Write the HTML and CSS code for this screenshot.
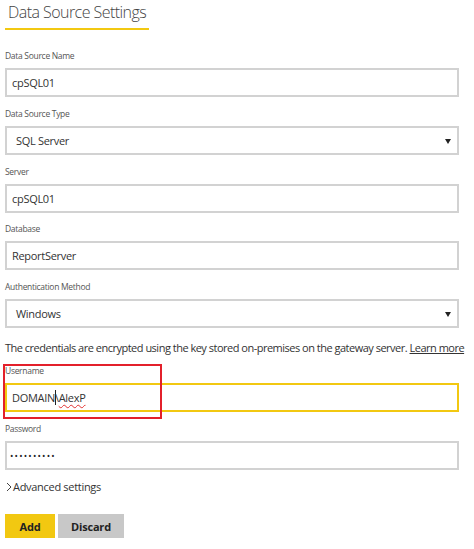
FILE: index.html
```html
<!DOCTYPE html>
<html>
<head>
<meta charset="utf-8">
<link rel="stylesheet" href="styles.css">
</head>
<body>
<div class="page">
  <div class="title-wrap">
    <h1 class="title">Data Source Settings</h1>
  </div>

  <div class="field first">
    <div class="label">Data Source Name</div>
    <div class="input">cpSQL01</div>
  </div>
  <div class="field">
    <div class="label">Data Source Type</div>
    <div class="input select">SQL Server<span class="arrow"></span></div>
  </div>
  <div class="field">
    <div class="label">Server</div>
    <div class="input">cpSQL01</div>
  </div>
  <div class="field">
    <div class="label">Database</div>
    <div class="input">ReportServer</div>
  </div>
  <div class="field">
    <div class="label">Authentication Method</div>
    <div class="input select">Windows<span class="arrow"></span></div>
  </div>

  <p class="note">The credentials are encrypted using the key stored on-premises on the gateway server. <a class="link">Learn more</a></p>

  <div class="field user">
    <div class="label">Username</div>
    <div class="input focus">DOMAIN<span class="caret"></span>\<span class="spell">AlexP</span></div>
  </div>
  <div class="field">
    <div class="label">Password</div>
    <div class="input pw">••••••••••</div>
  </div>

  <div class="advanced">
    <svg class="chev" width="6" height="10" viewBox="0 0 6 10"><path d="M1 1 L5 5 L1 9" fill="none" stroke="#444" stroke-width="1"/></svg>
    <span>Advanced settings</span>
  </div>

  <div class="buttons">
    <button class="btn add">Add</button>
    <button class="btn discard">Discard</button>
  </div>

  <div class="highlight"></div>
</div>
</body>
</html>
```
FILE: styles.css
```css
* { box-sizing: border-box; }
html, body { margin: 0; padding: 0; background: #fff; }
body {
  font-family: "Open Sans", "Noto Sans", sans-serif;
  color: #333;
}
.page {
  position: relative;
  width: 474px;
  height: 549px;
  padding: 0 15px 0 5px;
}
.title-wrap {
  display: inline-block;
  border-bottom: 2px solid #f2c811;
  padding: 0 3px 4px 3px;
}
.title {
  margin: 0;
  font-weight: 300;
  font-size: 16px;
  line-height: 24px;
  color: #444;
  letter-spacing: -0.55px;
}
.field {
  display: flex;
  flex-direction: column;
}
.first { margin-top: 20px; }
.label {
  font-size: 8.5px;
  line-height: 12px;
  color: #555;
  letter-spacing: -0.3px;
  margin-bottom: 6px;
}
.input {
  position: relative;
  height: 29px;
  border: 2px solid #d2d2d2;
  padding: 0 0 0 5px;
  font-size: 11px;
  letter-spacing: -0.3px;
  line-height: 25px;
  color: #333;
  margin-bottom: 10.75px;
}
.select { padding-left: 9px; }
.arrow {
  position: absolute;
  right: 6px;
  top: 11px;
  width: 0;
  height: 0;
  border-left: 3px solid transparent;
  border-right: 3px solid transparent;
  border-top: 5px solid #222;
}
.note {
  margin: 1px 0 0 0;
  font-size: 11px;
  line-height: 16px;
  letter-spacing: -0.5px;
  color: #333;
  white-space: nowrap;
}
.link {
  color: #333;
  text-decoration: underline;
}
.user { margin-top: 9px; }
.focus {
  border-color: #f2c811;
  padding-left: 5px;
}
.caret {
  display: inline-block;
  width: 1px;
  height: 15px;
  background: #222;
  vertical-align: -3px;
  margin-right: -1px;
}
.spell {
  text-decoration: underline wavy #e03030;
  text-decoration-thickness: 1px;
  text-underline-offset: 2px;
}
.pw {
  font-size: 9px;
  letter-spacing: 1.2px;
  padding-left: 3px;
  color: #222;
}
.advanced {
  display: flex;
  align-items: center;
  gap: 1px;
  font-size: 11px;
  letter-spacing: -0.3px;
  line-height: 16px;
  color: #333;
  margin-top: -1px;
}
.chev { margin-left: 1px; }
.buttons {
  display: flex;
  gap: 3px;
  margin-top: 19px;
}
.btn {
  border: none;
  height: 24px;
  font-family: inherit;
  font-size: 11px;
  letter-spacing: -0.2px;
  font-weight: 700;
  color: #222;
  padding: 0;
}
.add { width: 50px; background: #f2c811; }
.discard { width: 66px; background: #c8c8c8; }
.highlight {
  position: absolute;
  left: 3px;
  top: 364px;
  width: 159px;
  height: 55px;
  border: 2px solid #e3202b;
}
```
